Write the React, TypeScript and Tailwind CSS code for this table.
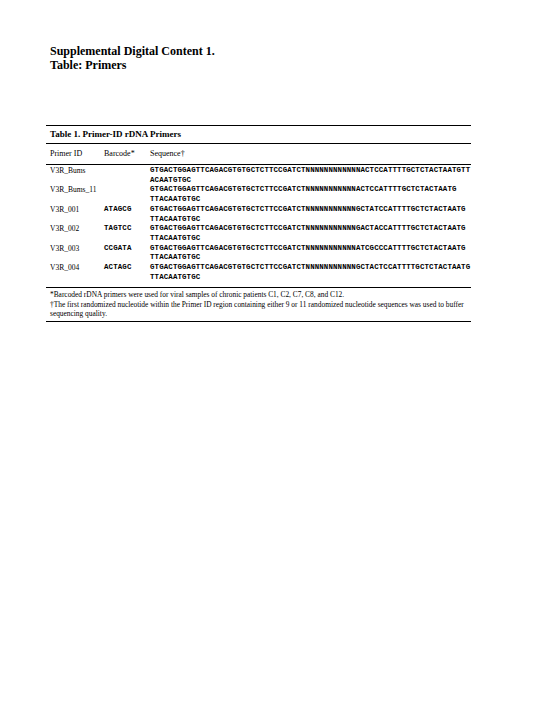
import React from 'react';

// Primer table from the supplemental PDF page

interface PrimerRow {
  id: string;
  barcode: string;
  seq: [string, string];
}

const ADAPTER = 'GTGACTGGAGTTCAGACGTGTGCTCTTCCGATCT';

const rows: PrimerRow[] = [
  { id: 'V3R_Bums', barcode: '', seq: [ADAPTER + 'NNNNNNNNNNNNACTCCATTTTGCTCTACTAATGTT', 'ACAATGTGC'] },
  { id: 'V3R_Bums_11', barcode: '', seq: [ADAPTER + 'NNNNNNNNNNNACTCCATTTTGCTCTACTAATG', 'TTACAATGTGC'] },
  { id: 'V3R_001', barcode: 'ATAGCG', seq: [ADAPTER + 'NNNNNNNNNNNGCTATCCATTTTGCTCTACTAATG', 'TTACAATGTGC'] },
  { id: 'V3R_002', barcode: 'TAGTCC', seq: [ADAPTER + 'NNNNNNNNNNNGACTACCATTTTGCTCTACTAATG', 'TTACAATGTGC'] },
  { id: 'V3R_003', barcode: 'CCGATA', seq: [ADAPTER + 'NNNNNNNNNNNATCGCCCATTTTGCTCTACTAATG', 'TTACAATGTGC'] },
  { id: 'V3R_004', barcode: 'ACTAGC', seq: [ADAPTER + 'NNNNNNNNNNNGCTACTCCATTTTGCTCTACTAATG', 'TTACAATGTGC'] },
];

const seqFont = "font-['Liberation_Mono',monospace] font-bold text-[7.4px] tracking-[0.14px] whitespace-nowrap";

export default function App() {
  return (
    <div className="w-[540px] h-[720px] bg-white text-black font-['Liberation_Serif',serif] pt-[44px] pl-[50px]">
      <div className="font-bold text-[12px] leading-[14px]">
        <div>Supplemental Digital Content 1.</div>
        <div>Table: Primers</div>
      </div>

      <div className="w-[425px] -ml-[4px] mt-[53px] border-t border-black border-b">
        {/* caption */}
        <div className="h-[18px] flex items-center pl-[4px] font-bold text-[9px] border-b border-black">
          Table 1. Primer-ID rDNA Primers
        </div>

        {/* header */}
        <div className="h-[21px] flex items-center pl-[4px] text-[8px] border-b border-black">
          <div className="w-[54px] shrink-0">Primer ID</div>
          <div className="w-[46px] shrink-0">Barcode*</div>
          <div>Sequence†</div>
        </div>

        {/* rows */}
        <div className="pt-[1px] pb-[5px] border-b border-black">
          {rows.map(row => (
            <div key={row.id} className="flex pl-[4px] leading-[9.7px]">
              <div className="w-[54px] shrink-0 text-[7.5px]">{row.id}</div>
              <div className={`w-[46px] shrink-0 ${seqFont}`}>{row.barcode}</div>
              <div className={seqFont}>
                <div>{row.seq[0]}</div>
                <div>{row.seq[1]}</div>
              </div>
            </div>
          ))}
        </div>

        {/* footnotes */}
        <div className="pl-[4px] pt-[2px] pb-[2px] text-[7.4px] leading-[9.5px]">
          <div>*Barcoded rDNA primers were used for viral samples of chronic patients C1, C2, C7, C8, and C12.</div>
          <div>†The first randomized nucleotide within the Primer ID region containing either 9 or 11 randomized nucleotide sequences was used to buffer sequencing quality.</div>
        </div>
      </div>
    </div>
  );
}
